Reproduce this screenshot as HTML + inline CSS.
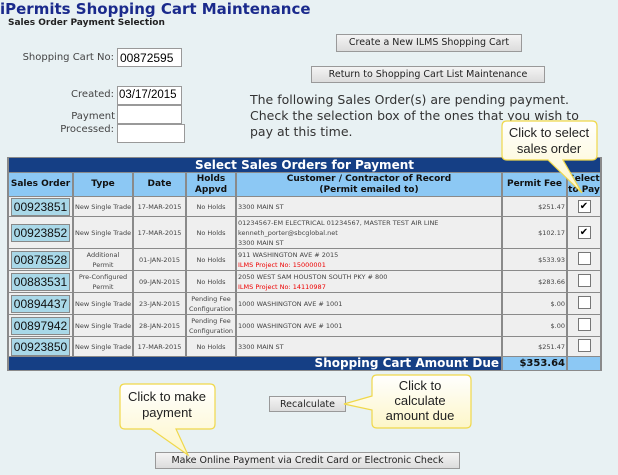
<!DOCTYPE html>
<html><head><style>
body{margin:0;width:618px;height:475px;background:#e8f1f3;font-family:"DejaVu Sans",Verdana,sans-serif;position:relative;overflow:hidden;color:#333}
.a{position:absolute}
h1{position:absolute;left:0;top:0;margin:0;font:bold 15px "DejaVu Sans",sans-serif;color:#1a2a8c}
.sub{left:8px;top:18px;font-size:9px;font-weight:bold;color:#222}
.lbl{font-size:10px;color:#444;text-align:right}
.inp{background:#fff;border:1px solid #999;font:12px "Liberation Sans",sans-serif;color:#000;padding:2px 2px;box-sizing:border-box;height:19px;white-space:nowrap;overflow:hidden}
.btn{background:linear-gradient(#f4f4f4,#dcdcdc);border:1px solid #999;font-size:9.5px;color:#222;text-align:center;box-sizing:border-box;line-height:16px}
table{position:absolute;left:7px;top:157px;width:595px;border-collapse:separate;border-spacing:2px 1px;background:#8a8a8a;table-layout:fixed}
td{background:#efefef;font-size:6.5px;color:#444;padding:0 1px;text-align:center;overflow:hidden;white-space:nowrap}
th{background:#8cc8f4;font-size:9px;color:#111;line-height:11px;padding:0}
.t{background:#153f85;color:#fff;font-size:12px;font-weight:bold;text-align:center;height:14px;line-height:14px}
.so{background:#a9d8e8;border:1px solid #888;font:12px "Liberation Sans",sans-serif;color:#111;height:16px;line-height:16px;margin:0 1px}
.l{text-align:left}.r{text-align:right}
.cb{display:inline-block;width:11px;height:11px;border:1px solid #777;background:#fff;font-size:10px;line-height:11px;color:#000}
.red{color:#e00}
</style></head><body>
<h1>iPermits Shopping Cart Maintenance</h1>
<div class="a sub">Sales Order Payment Selection</div>
<div class="a lbl" style="left:10px;top:52px;width:104px">Shopping Cart No:</div>
<div class="a inp" style="left:117px;top:48px;width:65px">00872595</div>
<div class="a lbl" style="left:40px;top:89px;width:74px">Created:</div>
<div class="a inp" style="left:117px;top:86px;width:65px;font-size:11.5px;padding:2px 1px">03/17/2015</div>
<div class="a lbl" style="left:40px;top:111px;width:75px">Payment</div>
<div class="a inp" style="left:117px;top:105px;width:65px"></div>
<div class="a lbl" style="left:40px;top:124px;width:74px">Processed:</div>
<div class="a inp" style="left:117px;top:124px;width:68px"></div>
<div class="a btn" style="left:336px;top:34px;width:186px;height:18px">Create a New ILMS Shopping Cart</div>
<div class="a btn" style="left:311px;top:66px;width:234px;height:17px">Return to Shopping Cart List Maintenance</div>
<div class="a" style="left:250px;top:92px;font-size:12.5px;line-height:16px;color:#333;white-space:nowrap">The following Sales Order(s) are pending payment.<br>Check the selection box of the ones that you wish to<br>pay at this time.</div>
<table>
<colgroup><col style="width:63px"><col style="width:58px"><col style="width:51px"><col style="width:48px"><col style="width:264px"><col style="width:63px"><col></colgroup>
<tr><td colspan="7" class="t">Select Sales Orders for Payment</td></tr>
<tr style="height:23px"><th>Sales Order</th><th>Type</th><th>Date</th><th>Holds Appvd</th><th>Customer / Contractor of Record<br>(Permit emailed to)</th><th>Permit Fee</th><th>Select to Pay</th></tr>
<tr style="height:19px"><td><div class="so">00923851</div></td><td>New Single Trade</td><td>17-MAR-2015</td><td>No Holds</td><td class="l">3300 MAIN ST</td><td class="r">$251.47</td><td><span class="cb">✔</span></td></tr>
<tr style="height:31px"><td><div class="so">00923852</div></td><td>New Single Trade</td><td>17-MAR-2015</td><td>No Holds</td><td class="l" style="line-height:10px">01234567-EM ELECTRICAL 01234567, MASTER TEST AIR LINE<br>kenneth_porter@sbcglobal.net<br>3300 MAIN ST</td><td class="r">$102.17</td><td><span class="cb">✔</span></td></tr>
<tr style="height:21px"><td><div class="so">00878528</div></td><td style="line-height:10px">Additional<br>Permit</td><td>01-JAN-2015</td><td>No Holds</td><td class="l" style="line-height:10px">911 WASHINGTON AVE # 2015<br><span class="red">ILMS Project No: 15000001</span></td><td class="r">$533.93</td><td><span class="cb"></span></td></tr>
<tr style="height:21px"><td><div class="so">00883531</div></td><td style="line-height:10px">Pre-Configured<br>Permit</td><td>09-JAN-2015</td><td>No Holds</td><td class="l" style="line-height:10px">2050 WEST SAM HOUSTON SOUTH PKY # 800<br><span class="red">ILMS Project No: 14110987</span></td><td class="r">$283.66</td><td><span class="cb"></span></td></tr>
<tr style="height:21px"><td><div class="so">00894437</div></td><td>New Single Trade</td><td>23-JAN-2015</td><td style="line-height:10px">Pending Fee<br>Configuration</td><td class="l">1000 WASHINGTON AVE # 1001</td><td class="r">$.00</td><td><span class="cb"></span></td></tr>
<tr style="height:21px"><td><div class="so">00897942</div></td><td>New Single Trade</td><td>28-JAN-2015</td><td style="line-height:10px">Pending Fee<br>Configuration</td><td class="l">1000 WASHINGTON AVE # 1001</td><td class="r">$.00</td><td><span class="cb"></span></td></tr>
<tr style="height:19px"><td><div class="so">00923850</div></td><td>New Single Trade</td><td>17-MAR-2015</td><td>No Holds</td><td class="l">3300 MAIN ST</td><td class="r">$251.47</td><td><span class="cb"></span></td></tr>
<tr style="height:13px"><td colspan="5" class="t r" style="padding-right:2px;height:13px;line-height:13px">Shopping Cart Amount Due</td><td style="background:#8cc8f4;font-size:10px;font-weight:bold;color:#111" class="r">$353.64</td><td style="background:#8cc8f4"></td></tr>
</table>
<div class="a btn" style="left:269px;top:396px;width:77px;height:16px">Recalculate</div>
<div class="a btn" style="left:155px;top:452px;width:305px;height:17px">Make Online Payment via Credit Card or Electronic Check</div>
<svg class="a" style="left:0;top:0" width="618" height="475">
<defs><linearGradient id="g" x1="0" y1="0" x2="0" y2="1"><stop offset="0" stop-color="#fff"/><stop offset="1" stop-color="#fdf6c8"/></linearGradient></defs>
<g fill="url(#g)" stroke="#f0d84a" stroke-width="1.2">
<path d="M507,121 H592 Q597,121 597,126 V155 Q597,160 592,160 H563 L582,193 L548,160 H507 Q502,160 502,155 V126 Q502,121 507,121 Z"/>
<path d="M125,384 H210 Q215,384 215,389 V424 Q215,429 210,429 H176 L188,455 L151,429 H125 Q120,429 120,424 V389 Q120,384 125,384 Z"/>
<path d="M377,375 H466 Q471,375 471,380 V423 Q471,428 466,428 H377 Q372,428 372,423 V410 L344,404 L372,396 V380 Q372,375 377,375 Z"/>
</g>
<g font-family="Liberation Sans,sans-serif" font-size="13" fill="#222" text-anchor="middle">
<text x="549" y="137">Click to select</text><text x="549" y="153">sales order</text>
<text x="167" y="401">Click to make</text><text x="167" y="417">payment</text>
<text x="420" y="390">Click to</text><text x="420" y="405">calculate</text><text x="420" y="420">amount due</text>
</g>
</svg>
</body></html>
